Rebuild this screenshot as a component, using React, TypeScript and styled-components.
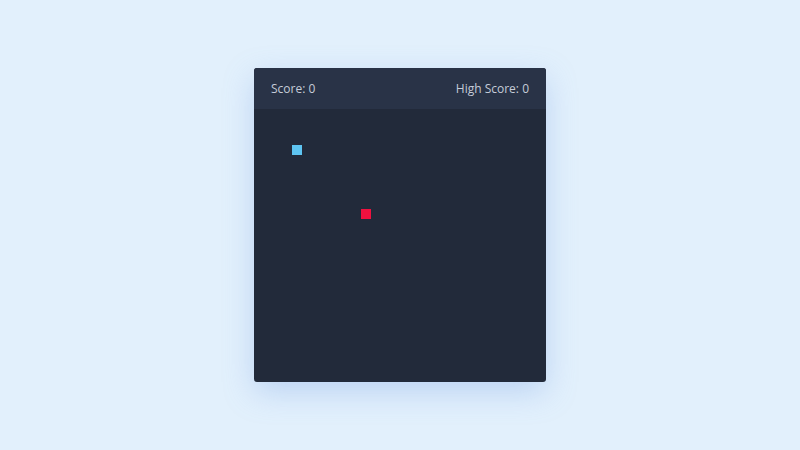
import styled, {createGlobalStyle} from "styled-components";

const GlobalStyle = createGlobalStyle`
  html, body {
    margin: 0;
    height: 100%;
    background: #e2f0fc;
  }
  #root {
    height: 100%;
  }
`;

const snake = [{x: 38, y: 36}];
const food = {x: 107, y: 100};

export default function App() {
  return <Page>
    <GlobalStyle/>
    <Game>
      <Header>
        <span>Score: 0</span>
        <span>High Score: 0</span>
      </Header>
      <Board>
        {snake.map((s, i) =>
          <Cell key={i} $color="#5ec4f1" style={{left: s.x, top: s.y}}/>
        )}
        <Cell $color="#f0113f" style={{left: food.x, top: food.y}}/>
      </Board>
    </Game>
  </Page>
}

const Page = styled.div`
  height: 100%;
  display: flex;
  justify-content: center;
  padding-top: 68px;
  box-sizing: border-box;
`;

const Game = styled.div`
  width: 292px;
  height: 314px;
  display: flex;
  flex-direction: column;
  border-radius: 3px;
  overflow: hidden;
  background: #222a3a;
  box-shadow: 0 10px 30px rgba(120, 160, 230, 0.35);
`;

const Header = styled.div`
  height: 41px;
  display: flex;
  align-items: center;
  justify-content: space-between;
  padding: 0 17px 0 17px;
  background: #293347;
  color: #c5ccd8;
  font-family: "Open Sans", sans-serif;
  font-size: 12px;
`;

const Board = styled.div`
  position: relative;
  flex: 1;
`;

const Cell = styled.div<{ $color: string }>`
  position: absolute;
  width: 10px;
  height: 10px;
  background: ${p => p.$color};
`;
